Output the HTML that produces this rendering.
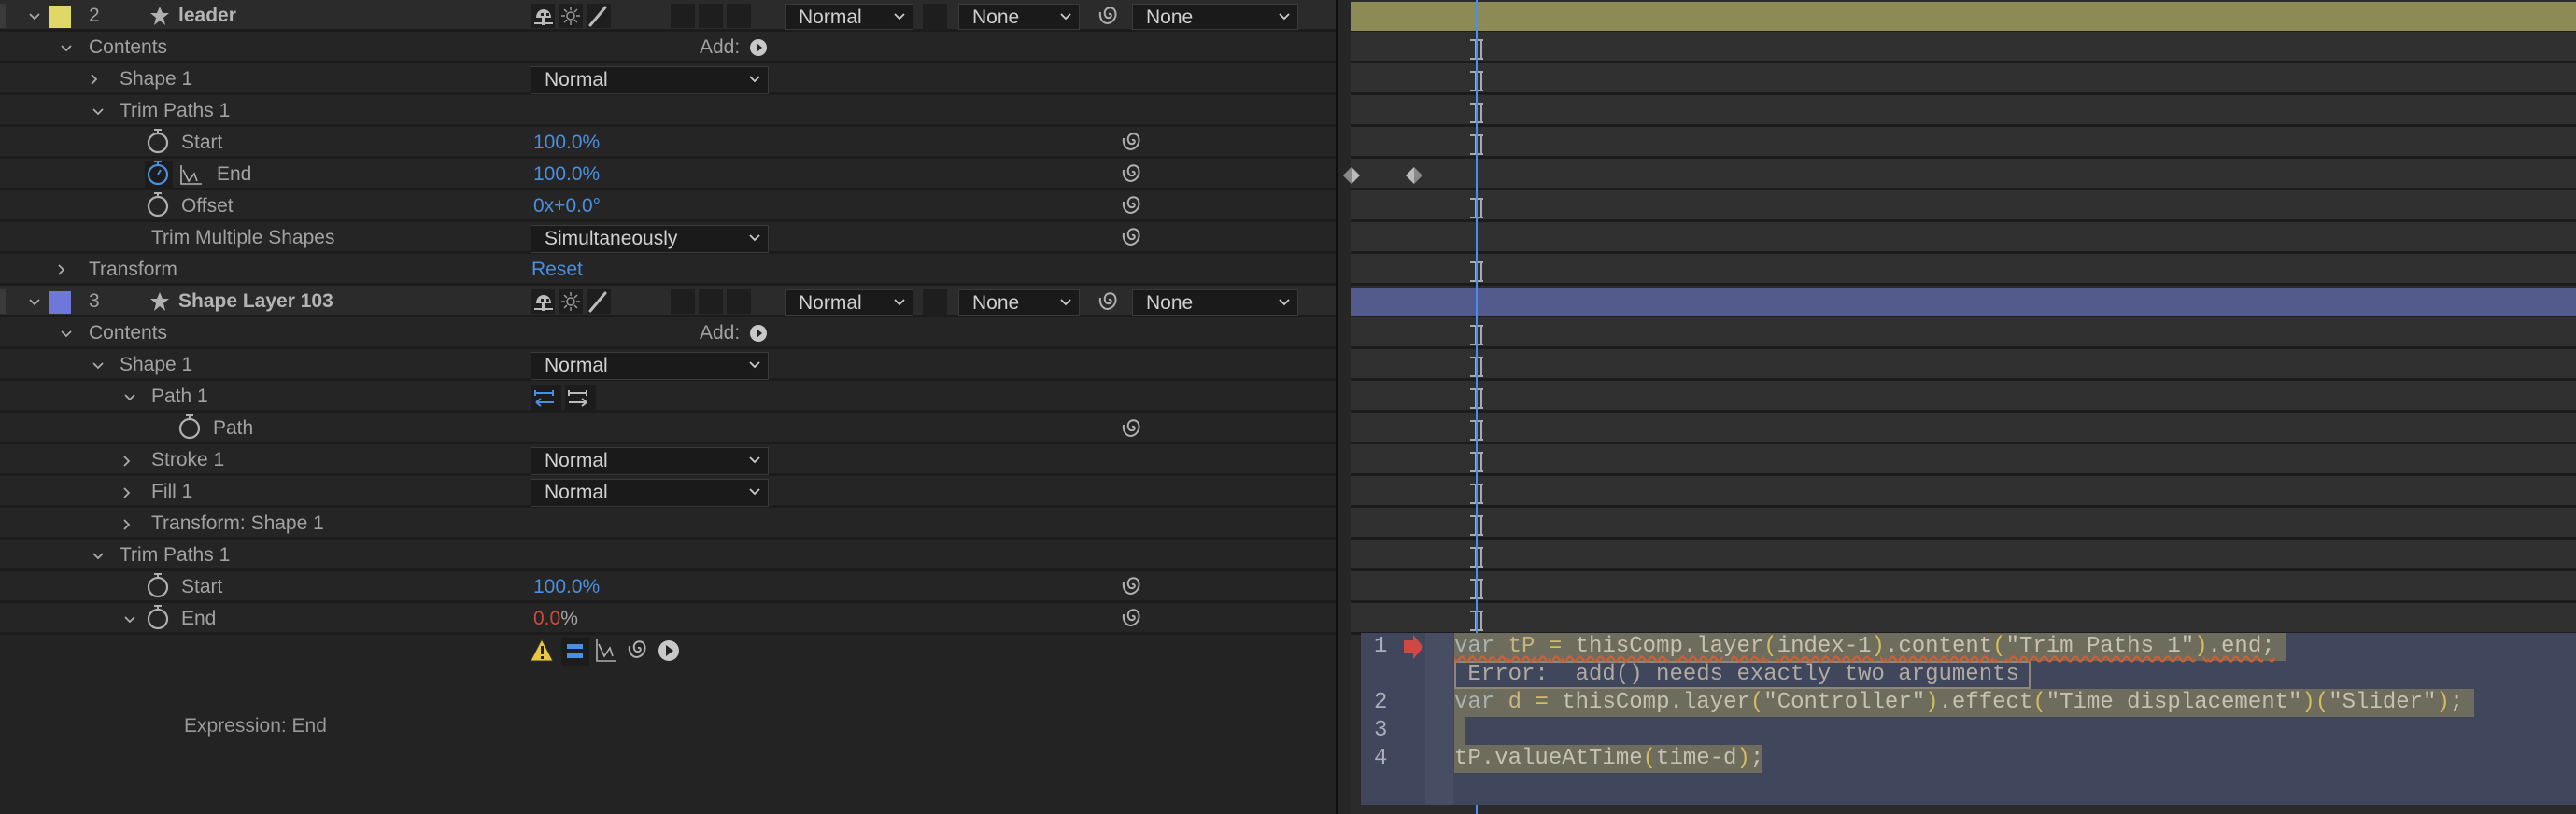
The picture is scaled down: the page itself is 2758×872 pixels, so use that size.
<!DOCTYPE html>
<html><head><meta charset="utf-8"><style>
*{margin:0;padding:0;box-sizing:border-box}
body{width:2758px;height:872px;background:#232323;position:relative;overflow:hidden;font-family:"Liberation Sans",sans-serif;}
.a{position:absolute}
.row{position:absolute;left:0;width:1430px;height:34px;background:#252525;border-bottom:3px solid #1c1c1c}
.lrow{background:#2b2b2b}
.t{position:absolute;font-size:21px;color:#a2a2a2;line-height:34px;top:0;white-space:nowrap}
.b{font-weight:bold;color:#b4b4b4}
.v{position:absolute;font-size:21px;color:#4a8fe0;line-height:34px;top:0;left:571px}
.dd{position:absolute;background:#1a1a1a;border:1px solid #3a3a3a;height:30px;top:2px;color:#d0d0d0;font-size:21px;line-height:28px;padding-left:14px}
.dd svg{position:absolute;right:8px;top:9px}
.tl{position:absolute;left:1446px;right:0;height:34px;background:#303030;border-bottom:3px solid #1c1c1c}
.ib{position:absolute;left:1574px;width:14px;height:22px;border-top:2px solid #aaa;border-bottom:2px solid #aaa}
.ib:before{content:"";position:absolute;left:5px;top:0;width:4px;height:18px;border-left:2px solid #aaa;border-right:2px solid #aaa}
.code{font-family:"Liberation Mono",monospace;font-size:24px;color:#c6c2b0;white-space:pre;line-height:30px;position:absolute;left:1557px}
.y{color:#d2bc60}
</style></head><body>

<div class="row lrow" style="top:0"></div>
<div class="row" style="top:34px"></div>
<div class="row" style="top:68px"></div>
<div class="row" style="top:102px"></div>
<div class="row" style="top:136px"></div>
<div class="row" style="top:170px"></div>
<div class="row" style="top:204px"></div>
<div class="row" style="top:238px"></div>
<div class="row" style="top:272px"></div>
<div class="row lrow" style="top:306px"></div>
<div class="row" style="top:340px"></div>
<div class="row" style="top:374px"></div>
<div class="row" style="top:408px"></div>
<div class="row" style="top:442px"></div>
<div class="row" style="top:476px"></div>
<div class="row" style="top:510px"></div>
<div class="row" style="top:544px"></div>
<div class="row" style="top:578px"></div>
<div class="row" style="top:612px"></div>
<div class="row" style="top:646px"></div>

<svg class="a" style="left:0;top:0" width="1430" height="872">
<defs>
<g id="cd"><polyline points="0,0 5,5 10,0" fill="none" stroke="#aaa" stroke-width="1.8"/></g>
<g id="cr"><polyline points="0,0 5,5 0,10" fill="none" stroke="#aaa" stroke-width="1.8"/></g>
<g id="sw"><circle cx="0" cy="3" r="10" fill="none" stroke="#b0b0b0" stroke-width="2.2"/><line x1="0" y1="-7" x2="0" y2="-11" stroke="#b0b0b0" stroke-width="2"/><line x1="-4" y1="-11" x2="4" y2="-11" stroke="#b0b0b0" stroke-width="2"/></g>
<g id="sp"><path d="M0,0 C3,-1 4,3 1,4 C-3,5 -5,1 -4,-3 C-2,-8 5,-8 7,-3 C9,3 5,9 -1,10 C-7,10 -10,4 -9,-2" fill="none" stroke="#b0b0b0" stroke-width="2"/></g>
<g id="sw3"><rect x="-14" y="-11" width="26" height="26" fill="#1e1e1e"/>
<path d="M-8,4 C-8,-8 8,-8 8,4 Z" fill="#bbb"/><rect x="-3" y="-1" width="3" height="3" fill="#1e1e1e"/><rect x="3" y="-1" width="3" height="3" fill="#1e1e1e"/><line x1="-10" y1="10" x2="10" y2="10" stroke="#bbb" stroke-width="2"/><rect x="-2" y="3" width="4" height="9" fill="#bbb"/>
<rect x="16" y="-11" width="26" height="26" fill="#1e1e1e"/>
<circle cx="29" cy="2" r="4" fill="none" stroke="#999" stroke-width="1.5"/><path d="M29,-8 V-4 M29,8 V12 M19,2 H23 M35,2 H39 M22,-5 L25,-2 M33,6 L36,9 M36,-5 L33,-2 M25,6 L22,9" stroke="#999" stroke-width="1.5"/>
<rect x="46" y="-11" width="26" height="26" fill="#1e1e1e"/>
<line x1="50" y1="12" x2="66" y2="-7" stroke="#bbb" stroke-width="3" stroke-linecap="round"/></g>
</defs>
<rect x="0" y="4" width="6" height="26" fill="#3a3a3a"/>
<use href="#cd" x="32" y="15"/>
<rect x="52" y="6" width="24" height="24" fill="#e0d769"/>
<use href="#sw3" x="582" y="15"/>
<rect x="718" y="4" width="26" height="26" fill="#1e1e1e"/><rect x="748" y="4" width="26" height="26" fill="#1e1e1e"/><rect x="778" y="4" width="26" height="26" fill="#1e1e1e"/>
<rect x="988" y="4" width="26" height="28" fill="#1e1e1e"/>
<use href="#sp" x="1187" y="15"/>
<path d="M171,7 L174,14 L181,14 L175,19 L177,27 L171,22 L165,27 L167,19 L161,14 L168,14 Z" fill="#b0b0b0"/>
<use href="#cd" x="66" y="49"/>
<circle cx="812" cy="51" r="9" fill="#c8c8c8"/><path d="M810,46 L816,51 L810,56 Z" fill="#232323"/>
<use href="#cr" x="98" y="80"/>
<use href="#cd" x="100" y="117"/>
<use href="#sw" x="169" y="150"/>
<rect x="155" y="173" width="30" height="30" fill="#1c1c1c"/>
<g transform="translate(169,184)"><circle cx="0" cy="3" r="10" fill="none" stroke="#4a8fe0" stroke-width="2.2"/><line x1="0" y1="-7" x2="0" y2="-11" stroke="#4a8fe0" stroke-width="2"/><line x1="-4" y1="-11" x2="4" y2="-11" stroke="#4a8fe0" stroke-width="2"/><line x1="0" y1="3" x2="3" y2="-2" stroke="#4a8fe0" stroke-width="2"/></g>
<path d="M194,177 V197 H216 M196,182 L202,194 L208,186 L211,194" fill="none" stroke="#b0b0b0" stroke-width="1.6"/>
<use href="#sw" x="169" y="218"/>
<use href="#cr" x="63" y="284"/>
<use href="#sp" x="1212" y="150"/><use href="#sp" x="1212" y="184"/><use href="#sp" x="1212" y="218"/><use href="#sp" x="1212" y="252"/>
<rect x="0" y="310" width="6" height="26" fill="#3a3a3a"/>
<use href="#cd" x="32" y="321"/>
<rect x="52" y="312" width="24" height="24" fill="#6d78d8"/>
<use href="#sw3" x="582" y="321"/>
<rect x="718" y="310" width="26" height="26" fill="#1e1e1e"/><rect x="748" y="310" width="26" height="26" fill="#1e1e1e"/><rect x="778" y="310" width="26" height="26" fill="#1e1e1e"/>
<rect x="988" y="310" width="26" height="28" fill="#1e1e1e"/>
<use href="#sp" x="1187" y="321"/>
<path d="M171,313 L174,320 L181,320 L175,325 L177,333 L171,328 L165,333 L167,325 L161,320 L168,320 Z" fill="#b0b0b0"/>
<use href="#cd" x="66" y="355"/>
<circle cx="812" cy="357" r="9" fill="#c8c8c8"/><path d="M810,352 L816,357 L810,362 Z" fill="#232323"/>
<use href="#cd" x="100" y="389"/>
<use href="#cd" x="134" y="423"/>
<rect x="569" y="412" width="32" height="30" fill="#1c1c1c"/><rect x="605" y="412" width="33" height="30" fill="#1c1c1c"/>
<path d="M573,418 V424 M573,421 H592 M592,418 V424 M574,431 H593 M574,431 L579,427 M574,431 L579,435" fill="none" stroke="#4a8fe0" stroke-width="2"/>
<path d="M609,418 V424 M609,421 H628 M628,418 V424 M609,431 H628 M628,431 L623,427 M628,431 L623,435" fill="none" stroke="#bbb" stroke-width="2"/>
<use href="#sw" x="203" y="456"/>
<use href="#sp" x="1212" y="457"/>
<use href="#cr" x="133" y="489"/>
<use href="#cr" x="133" y="523"/>
<use href="#cr" x="133" y="557"/>
<use href="#cd" x="100" y="593"/>
<use href="#sw" x="169" y="626"/>
<use href="#sp" x="1212" y="626"/>
<use href="#cd" x="134" y="661"/>
<use href="#sw" x="169" y="660"/>
<use href="#sp" x="1212" y="660"/>
<path d="M580,685 L592,708 L568,708 Z" fill="#e8c840" stroke="#333" stroke-width="1"/><rect x="579" y="692" width="3" height="9" fill="#222"/><rect x="579" y="703" width="3" height="3" fill="#222"/>
<rect x="601" y="683" width="30" height="30" fill="#1c1c1c"/><rect x="607" y="690" width="17" height="5" fill="#4a8fe0"/><rect x="607" y="700" width="17" height="5" fill="#4a8fe0"/>
<path d="M639,685 V708 H659 M641,690 L647,703 L653,694 L656,703" fill="none" stroke="#b0b0b0" stroke-width="1.6"/>
<use href="#sp" x="683" y="694"/>
<circle cx="716" cy="697" r="11" fill="#c8c8c8"/><path d="M713,691 L721,697 L713,703 Z" fill="#232323"/>
</svg>

<div class="t" style="left:95px;top:0">2</div>
<div class="t b" style="left:191px;top:0">leader</div>
<div class="dd" style="left:840px;top:4px;width:138px;height:28px">Normal<svg width="12" height="8"><polyline points="1,1 6,6 11,1" fill="none" stroke="#ccc" stroke-width="1.8"/></svg></div>
<div class="dd" style="left:1026px;top:4px;width:130px;height:28px">None<svg width="12" height="8"><polyline points="1,1 6,6 11,1" fill="none" stroke="#ccc" stroke-width="1.8"/></svg></div>
<div class="dd" style="left:1212px;top:4px;width:178px;height:28px">None<svg width="12" height="8"><polyline points="1,1 6,6 11,1" fill="none" stroke="#ccc" stroke-width="1.8"/></svg></div>

<div class="t" style="left:95px;top:34px">Contents</div>
<div class="t" style="left:749px;top:34px">Add:</div>
<div class="t" style="left:128px;top:68px">Shape 1</div>
<div class="dd" style="left:568px;top:71px;width:255px">Normal<svg width="12" height="8"><polyline points="1,1 6,6 11,1" fill="none" stroke="#ccc" stroke-width="1.8"/></svg></div>
<div class="t" style="left:128px;top:102px">Trim Paths 1</div>
<div class="t" style="left:194px;top:136px">Start</div><div class="v" style="top:136px">100.0%</div>
<div class="t" style="left:232px;top:170px">End</div><div class="v" style="top:170px">100.0%</div>
<div class="t" style="left:194px;top:204px">Offset</div><div class="v" style="top:204px">0x+0.0°</div>
<div class="t" style="left:162px;top:238px">Trim Multiple Shapes</div>
<div class="dd" style="left:568px;top:241px;width:255px">Simultaneously<svg width="12" height="8"><polyline points="1,1 6,6 11,1" fill="none" stroke="#ccc" stroke-width="1.8"/></svg></div>
<div class="t" style="left:95px;top:272px">Transform</div><div class="v" style="top:272px;left:569px">Reset</div>

<div class="t" style="left:95px;top:306px">3</div>
<div class="t b" style="left:191px;top:306px">Shape Layer 103</div>
<div class="dd" style="left:840px;top:310px;width:138px;height:28px">Normal<svg width="12" height="8"><polyline points="1,1 6,6 11,1" fill="none" stroke="#ccc" stroke-width="1.8"/></svg></div>
<div class="dd" style="left:1026px;top:310px;width:130px;height:28px">None<svg width="12" height="8"><polyline points="1,1 6,6 11,1" fill="none" stroke="#ccc" stroke-width="1.8"/></svg></div>
<div class="dd" style="left:1212px;top:310px;width:178px;height:28px">None<svg width="12" height="8"><polyline points="1,1 6,6 11,1" fill="none" stroke="#ccc" stroke-width="1.8"/></svg></div>

<div class="t" style="left:95px;top:340px">Contents</div>
<div class="t" style="left:749px;top:340px">Add:</div>
<div class="t" style="left:128px;top:374px">Shape 1</div>
<div class="dd" style="left:568px;top:377px;width:255px">Normal<svg width="12" height="8"><polyline points="1,1 6,6 11,1" fill="none" stroke="#ccc" stroke-width="1.8"/></svg></div>
<div class="t" style="left:162px;top:408px">Path 1</div>
<div class="t" style="left:228px;top:442px">Path</div>
<div class="t" style="left:162px;top:476px">Stroke 1</div>
<div class="dd" style="left:568px;top:479px;width:255px">Normal<svg width="12" height="8"><polyline points="1,1 6,6 11,1" fill="none" stroke="#ccc" stroke-width="1.8"/></svg></div>
<div class="t" style="left:162px;top:510px">Fill 1</div>
<div class="dd" style="left:568px;top:513px;width:255px">Normal<svg width="12" height="8"><polyline points="1,1 6,6 11,1" fill="none" stroke="#ccc" stroke-width="1.8"/></svg></div>
<div class="t" style="left:162px;top:544px">Transform: Shape 1</div>
<div class="t" style="left:128px;top:578px">Trim Paths 1</div>
<div class="t" style="left:194px;top:612px">Start</div><div class="v" style="top:612px">100.0%</div>
<div class="t" style="left:194px;top:646px">End</div><div class="v" style="top:646px"><span style="color:#d04a3a">0.0</span><span style="color:#a6a6a6">%</span></div>
<div class="t" style="left:197px;top:761px;color:#999">Expression: End</div>

<div class="a" style="left:1430px;top:0;width:2px;height:872px;background:#0e0e0e"></div>
<div class="a" style="left:1432px;top:0;width:14px;height:872px;background:#262626"></div>
<div class="a" style="left:1446px;top:0;right:0;height:872px;background:#2b2b2b"></div>
<div class="tl" style="top:0;background:#2b2b2b"></div>
<div class="a" style="left:1446px;top:2px;right:0;height:31px;background:#8c8a55"></div>
<div class="tl" style="top:34px"></div><div class="tl" style="top:68px"></div><div class="tl" style="top:102px"></div><div class="tl" style="top:136px"></div><div class="tl" style="top:170px"></div><div class="tl" style="top:204px"></div><div class="tl" style="top:238px"></div><div class="tl" style="top:272px"></div>
<div class="tl" style="top:306px;background:#2b2b2b"></div>
<div class="a" style="left:1446px;top:308px;right:0;height:31px;background:#535b8c"></div>
<div class="tl" style="top:340px"></div><div class="tl" style="top:374px"></div><div class="tl" style="top:408px"></div><div class="tl" style="top:442px"></div><div class="tl" style="top:476px"></div><div class="tl" style="top:510px"></div><div class="tl" style="top:544px"></div><div class="tl" style="top:578px"></div><div class="tl" style="top:612px"></div><div class="tl" style="top:646px"></div>

<div class="ib" style="top:42px"></div><div class="ib" style="top:76px"></div><div class="ib" style="top:110px"></div><div class="ib" style="top:144px"></div><div class="ib" style="top:212px"></div><div class="ib" style="top:280px"></div>
<div class="ib" style="top:348px"></div><div class="ib" style="top:382px"></div><div class="ib" style="top:416px"></div><div class="ib" style="top:450px"></div><div class="ib" style="top:484px"></div><div class="ib" style="top:518px"></div><div class="ib" style="top:552px"></div><div class="ib" style="top:586px"></div><div class="ib" style="top:620px"></div><div class="ib" style="top:654px"></div>
<svg class="a" style="left:1436px;top:178px" width="100" height="22"><path d="M11,1 L20,10 L11,19 L2,10 Z" fill="#bbb"/><path d="M11,1 L2,10 L11,19 Z" fill="#888"/><path d="M78,1 L87,10 L78,19 L69,10 Z" fill="#888"/><path d="M78,1 L69,10 L78,19 Z" fill="#bbb"/></svg>
<div class="a" style="left:1580px;top:0;width:2px;height:872px;background:#4a8ff0"></div>

<div class="a" style="left:1457px;top:678px;right:0;height:184px;background:#40475c"></div>
<div class="a" style="left:1526px;top:678px;width:30px;height:184px;background:#474e64"></div>
<div class="a" style="left:1557px;top:678px;width:891px;height:30px;background:#6e6c5c"></div>
<div class="a" style="left:1557px;top:708px;width:617px;height:30px;border:2px solid #8e887a"></div>
<div class="a" style="left:1557px;top:738px;width:1092px;height:30px;background:#6e6c5c"></div>
<div class="a" style="left:1557px;top:768px;width:12px;height:30px;background:#6e6c5c"></div>
<div class="a" style="left:1557px;top:798px;width:330px;height:30px;background:#6e6c5c"></div>
<svg class="a" style="left:1503px;top:680px" width="22" height="26"><path d="M0,6 H10 V0 L21,13 L10,26 V20 H0 Z" fill="#cc4a42"/></svg>
<div class="code" style="left:1471px;top:678px;color:#a8aebb">1</div>
<div class="code" style="left:1471px;top:738px;color:#a8aebb">2</div>
<div class="code" style="left:1471px;top:768px;color:#a8aebb">3</div>
<div class="code" style="left:1471px;top:798px;color:#a8aebb">4</div>
<div class="code" style="top:678px;text-decoration:underline wavy #c8603a;text-underline-offset:4px"><span style="color:#a8b4b0">var</span> <span style="color:#c8b480">tP</span> <span class="y">=</span> thisComp.layer<span class="y">(</span>index-1<span class="y">)</span>.content<span class="y">(</span>"Trim Paths 1"<span class="y">)</span>.end;</div>
<div class="code" style="top:708px;color:#b0aaa0"> Error:  add() needs exactly two arguments</div>
<div class="code" style="top:738px"><span style="color:#a8b4b0">var</span> <span style="color:#c8b480">d</span> <span class="y">=</span> thisComp.layer<span class="y">(</span>"Controller"<span class="y">)</span>.effect<span class="y">(</span>"Time displacement"<span class="y">)(</span>"Slider"<span class="y">)</span>;</div>
<div class="code" style="top:798px">tP.valueAtTime<span class="y">(</span>time-d<span class="y">)</span>;</div>
</body></html>
